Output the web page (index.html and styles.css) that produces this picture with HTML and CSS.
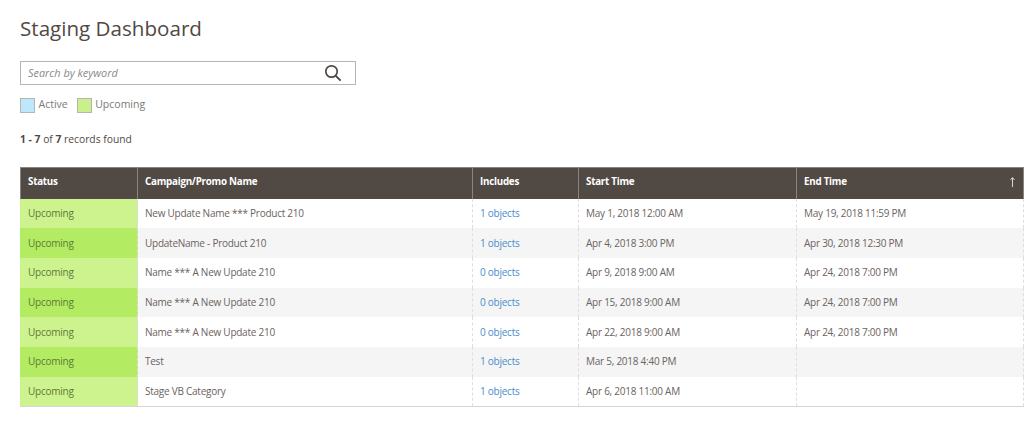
FILE: index.html
```html
<!DOCTYPE html>
<html lang="en">
<head>
  <meta charset="UTF-8">
  <title>Staging Dashboard</title>
  <link rel="stylesheet" href="styles.css">
</head>
<body>
  <h1 class="page-title">Staging Dashboard</h1>
  <!-- Search -->
  <div class="search-box">
    <input class="search-input" type="text" placeholder="Search by keyword">
    <svg class="search-icon" width="18" height="18" viewBox="0 0 18 18">
      <circle cx="7.5" cy="7.5" r="5.7" fill="none" stroke="#514943" stroke-width="1.7"/>
      <path d="M11.6 11.6 L16.6 16.6" stroke="#514943" stroke-width="2"/>
    </svg>
  </div>
  <!-- Legend -->
  <div class="legend">
    <span class="swatch swatch-active"></span><span class="legend-label">Active</span>
    <span class="swatch swatch-upcoming"></span><span class="legend-label">Upcoming</span>
  </div>
  <div class="records"><b>1 - 7</b> of <b>7</b> records found</div>
  <!-- Grid -->
  <table class="grid">
    <thead>
      <tr>
        <th class="col-status">Status</th>
        <th class="col-name">Campaign/Promo Name</th>
        <th class="col-includes">Includes</th>
        <th class="col-start">Start Time</th>
        <th class="col-end">
          <div class="th-sorted">
            End Time
            <svg width="5" height="10" viewBox="0 0 5 10">
              <path d="M2.5 10 V1 M0.5 3 L2.5 0.5 L4.5 3" fill="none" stroke="#d8d5d2" stroke-width="1"/>
            </svg>
          </div>
        </th>
      </tr>
    </thead>
    <tbody>
      <tr>
        <td class="status">Upcoming</td>
        <td>New Update Name *** Product 210</td>
        <td><a href="#">1 objects</a></td>
        <td>May 1, 2018 12:00 AM</td>
        <td>May 19, 2018 11:59 PM</td>
      </tr>
      <tr>
        <td class="status">Upcoming</td>
        <td>UpdateName - Product 210</td>
        <td><a href="#">1 objects</a></td>
        <td>Apr 4, 2018 3:00 PM</td>
        <td>Apr 30, 2018 12:30 PM</td>
      </tr>
      <tr>
        <td class="status">Upcoming</td>
        <td>Name *** A New Update 210</td>
        <td><a href="#">0 objects</a></td>
        <td>Apr 9, 2018 9:00 AM</td>
        <td>Apr 24, 2018 7:00 PM</td>
      </tr>
      <tr>
        <td class="status">Upcoming</td>
        <td>Name *** A New Update 210</td>
        <td><a href="#">0 objects</a></td>
        <td>Apr 15, 2018 9:00 AM</td>
        <td>Apr 24, 2018 7:00 PM</td>
      </tr>
      <tr>
        <td class="status">Upcoming</td>
        <td>Name *** A New Update 210</td>
        <td><a href="#">0 objects</a></td>
        <td>Apr 22, 2018 9:00 AM</td>
        <td>Apr 24, 2018 7:00 PM</td>
      </tr>
      <tr>
        <td class="status">Upcoming</td>
        <td>Test</td>
        <td><a href="#">1 objects</a></td>
        <td>Mar 5, 2018 4:40 PM</td>
        <td></td>
      </tr>
      <tr>
        <td class="status">Upcoming</td>
        <td>Stage VB Category</td>
        <td><a href="#">1 objects</a></td>
        <td>Apr 6, 2018 11:00 AM</td>
        <td></td>
      </tr>
    </tbody>
  </table>
</body>
</html>
```

FILE: styles.css
```css
html, body {
  height: 445px;
  overflow: hidden;
}
body {
  margin: 0;
  padding: 15px 0 0 20px;
  box-sizing: border-box;
  background: #fff;
  font-family: "Open Sans", sans-serif;
  font-size: 10px;
  color: #514943;
}
.page-title {
  margin: 0;
  font-size: 20.6px;
  font-weight: 400;
  line-height: 26px;
  color: #514943;
}
.search-box {
  display: flex;
  align-items: center;
  width: 336px;
  height: 24px;
  margin-top: 20px;
  box-sizing: border-box;
  border: 1px solid #b5b5b5;
}
.search-input {
  flex-grow: 1;
  border: none;
  outline: none;
  padding: 0 0 2px 7px;
  font-family: "Open Sans", sans-serif;
  font-size: 10.9px;
  font-style: italic;
  background: transparent;
}
.search-input::placeholder {
  color: #8a8a8a;
  opacity: 1;
}
.search-icon {
  margin-right: 13px;
}
.legend {
  display: flex;
  align-items: center;
  margin-top: 13px;
  height: 15px;
  font-size: 10.5px;
  color: #7a7a7a;
}
.swatch {
  width: 15px;
  height: 15px;
  box-sizing: border-box;
  border: 1px solid #b5b5b5;
}
.swatch-active {
  background: #bde7fb;
}
.swatch-upcoming {
  background: #c9f08a;
}
.legend-label {
  margin: 0 9px 0 3.5px;
  position: relative;
  top: -2px;
}
.records {
  margin-top: 19px;
  font-size: 10.3px;
  line-height: 14px;
}
.records b {
  font-weight: 700;
}
.grid {
  width: 1004px;
  margin-top: 21px;
  border-collapse: collapse;
  table-layout: fixed;
}
.col-status { width: 117px; }
.col-name { width: 335px; }
.col-includes { width: 106px; }
.col-start { width: 218px; }
.grid th {
  height: 31px;
  padding: 0 7px 3px;
  box-sizing: border-box;
  background: #514943;
  border: 1px solid #8a837f;
  border-bottom: none;
  color: #fff;
  font-size: 9.8px;
  font-weight: 700;
  letter-spacing: -0.25px;
  text-align: left;
}
.th-sorted {
  display: flex;
  justify-content: space-between;
  align-items: center;
  padding-right: 1px;
}
.grid td {
  height: 29.7px;
  padding: 0 7px 1px;
  box-sizing: border-box;
  font-size: 10px;
  letter-spacing: -0.25px;
  color: #6b635e;
  border-left: 1px dashed #dedede;
  border-right: 1px dashed #dedede;
}
.grid tbody tr:nth-child(even) td {
  background: #f5f5f5;
}
.grid tbody tr:last-child td {
  border-bottom: 1px solid #d6d6d6;
}
.grid td.status {
  background: #cdf38f;
  color: #5d7a38;
  border-left: 1px solid #cdf38f;
  border-right: none;
}
.grid tbody tr:nth-child(even) td.status {
  background: #b3ec62;
  border-left-color: #b3ec62;
}
.grid a {
  color: #4a8ccb;
  text-decoration: none;
}
```
